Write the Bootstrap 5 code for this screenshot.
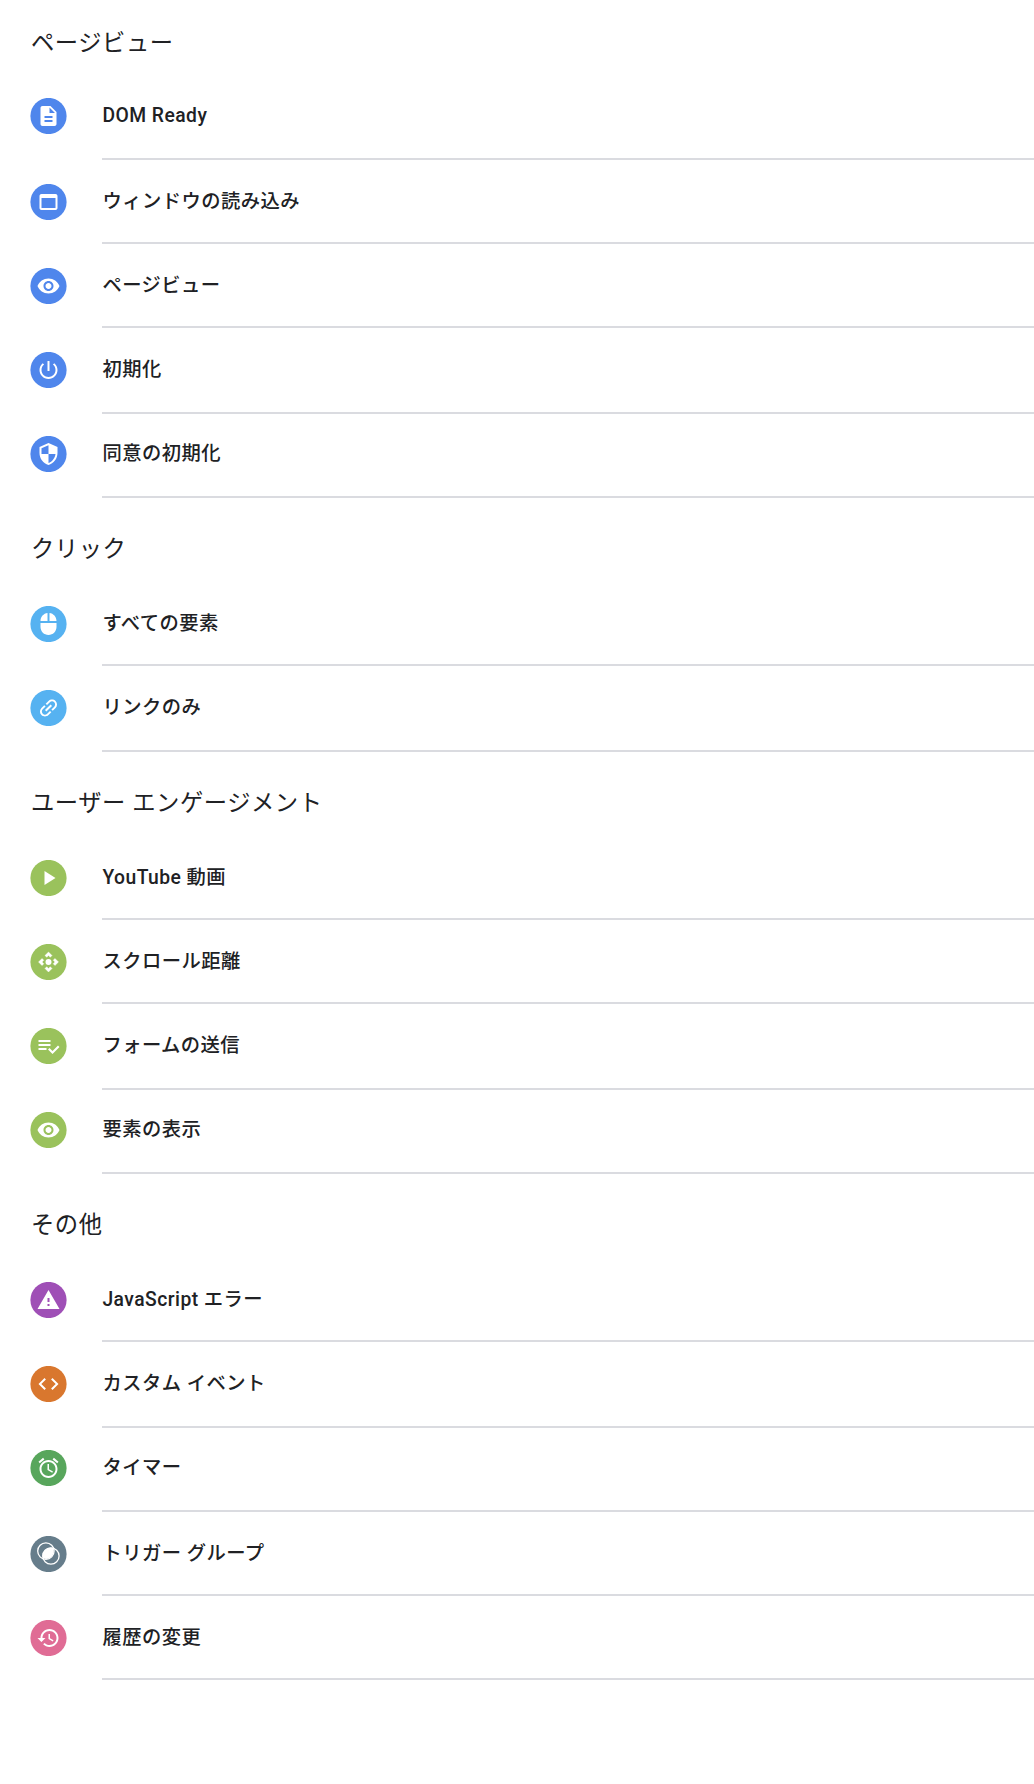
<!DOCTYPE html>
<html lang="ja">
<head>
<meta charset="utf-8">
<meta name="viewport" content="width=device-width, initial-scale=1">
<title>トリガーのタイプ</title>
<link href="https://cdn.jsdelivr.net/npm/bootstrap@5.3.0/dist/css/bootstrap.min.css" rel="stylesheet">
<style>
body{font-family:Roboto,"Noto Sans CJK JP",sans-serif;color:#202124;background:#fff;overflow-x:hidden}
.trig-title{font-size:23.3px;line-height:30px;letter-spacing:.55px;font-weight:400;height:108px;padding:36px 0 0 31px;margin:0}
.trig-first .trig-title{height:98px;padding-top:28px}
.trig-row{padding-left:30px;gap:35.4px;height:84px}
.trig-row.top0{height:60px}
.trig-row.top24{padding-top:24px}
.trig-row.top22{padding-top:22px}
.trig-row.tall{height:86px}
.trig-row.top0.tall{height:62px}
.trig-icon{width:37px;height:36px;flex:none;fill:#fff}
.trig-label{border-bottom:2px solid #dadbe0;font-size:19.3px;line-height:35px;font-weight:500;letter-spacing:.47px;white-space:nowrap}
.tone-blue{fill:#4f86ec}.tone-sky{fill:#56b2f1}.tone-lime{fill:#9ac25c}
.tone-purple{fill:#9f4fb6}.tone-orange{fill:#d9772e}.tone-green{fill:#58a65c}
.tone-slate{fill:#667d8b}.tone-pink{fill:#e06c95}
</style>
</head>
<body>
<main id="app"></main>
<script src="https://cdn.jsdelivr.net/npm/bootstrap@5.3.0/dist/js/bootstrap.bundle.min.js"></script>
<script>
const icons={
doc:'<path d="M14 2H6c-1.1 0-1.99.9-1.99 2L4 20c0 1.1.89 2 1.99 2H18c1.1 0 2-.9 2-2V8l-6-6zm2 16H8v-2h8v2zm0-4H8v-2h8v2zm-3-5V3.5L18.5 9H13z"/>',
win:'<path d="M19 4H5c-1.11 0-2 .9-2 2v12c0 1.1.89 2 2 2h14c1.1 0 2-.9 2-2V6c0-1.1-.89-2-2-2zm0 14H5V8h14v10z"/>',
eye:'<path d="M12 4.5C7 4.5 2.73 7.61 1 12c1.73 4.39 6 7.5 11 7.5s9.27-3.11 11-7.5c-1.73-4.39-6-7.5-11-7.5zM12 17c-2.76 0-5-2.24-5-5s2.24-5 5-5 5 2.24 5 5-2.24 5-5 5zm0-8c-1.66 0-3 1.34-3 3s1.34 3 3 3 3-1.34 3-3-1.34-3-3-3z"/>',
power:'<path d="M13 3h-2v10h2V3zm4.83 2.17l-1.42 1.42C17.99 7.86 19 9.81 19 12c0 3.87-3.13 7-7 7s-7-3.13-7-7c0-2.19 1.01-4.14 2.58-5.42L6.17 5.17C4.23 6.82 3 9.26 3 12c0 4.97 4.03 9 9 9s9-4.03 9-9c0-2.74-1.23-5.18-3.17-6.83z"/>',
shield:'<path d="M12 1L3 5v6c0 5.55 3.84 10.74 9 12 5.16-1.26 9-6.45 9-12V5l-9-4zm0 10.99h7c-.53 4.12-3.28 7.79-7 8.94V12H5V6.3l7-3.11v8.8z"/>',
mouse:'<path d="M13 1.07V9h7c0-4.08-3.05-7.44-7-7.93zM4 15c0 4.42 3.58 8 8 8s8-3.58 8-8v-4H4v4zm7-13.93C7.05 1.56 4 4.92 4 9h7V1.07z"/>',
link:'<path transform="rotate(-45 12 12)" d="M3.9 12c0-1.71 1.39-3.1 3.1-3.1h4V7H7c-2.76 0-5 2.24-5 5s2.24 5 5 5h4v-1.9H7c-1.71 0-3.1-1.39-3.1-3.1zM8 13h8v-2H8v2zm9-6h-4v1.9h4c1.71 0 3.1 1.39 3.1 3.1s-1.39 3.1-3.1 3.1h-4V17h4c2.76 0 5-2.24 5-5s-2.24-5-5-5z"/>',
play:'<path d="M8 5v14l11-7z"/>',
scroll:'<circle cx="12" cy="12" r="3"/><path d="M15.540 5.540L13.770 7.300 12 5.540 10.230 7.300 8.460 5.540 12 2zM18.460 15.540l-1.760-1.770L18.460 12l-1.760-1.770 1.760-1.770L22 12zM8.460 18.460l1.770-1.760L12 18.460l1.770-1.760 1.770 1.760L12 22zM5.540 8.460l1.760 1.770L5.540 12l1.760 1.770-1.760 1.770L2 12z" stroke="#fff" stroke-width=".4"/>',
form:'<path d="M14 10H2v2h12v-2zm0-4H2v2h12V6zM2 16h8v-2H2v2zm19.500-4.500L23 13l-6.990 7-4.510-4.500L13 14l3.010 3 5.490-5.500z"/>',
warn:'<path d="M1 21h22L12 2 1 21zm12-3h-2v-2h2v2zm0-4h-2v-4h2v4z"/>',
code:'<path d="M9.400 16.600L4.800 12l4.600-4.600L8 6l-6 6 6 6 1.400-1.400zm5.200 0l4.600-4.600-4.600-4.600L16 6l6 6-6 6-1.400-1.400z"/>',
alarm:'<path d="M22 5.720l-4.600-3.860-1.290 1.530 4.600 3.860L22 5.720zM7.880 3.390L6.600 1.860 2 5.710l1.290 1.530 4.590-3.850zM12.500 8H11v6l4.750 2.850.75-1.230-4-2.370V8zM12 4c-4.970 0-9 4.030-9 9s4.020 9 9 9c4.970 0 9-4.030 9-9s-4.030-9-9-9zm0 16c-3.870 0-7-3.130-7-7s3.130-7 7-7 7 3.130 7 7-3.130 7-7 7z"/>',
group:'<clipPath id="lens"><circle cx="14.300" cy="13.900" r="8.300"/></clipPath><circle cx="9.500" cy="9.200" r="7.700" clip-path="url(#lens)"/><g fill="none" stroke="#fff" stroke-width="1.300"><circle cx="9.400" cy="9.100" r="8.200"/><circle cx="14.400" cy="14" r="8.200"/></g>',
history:'<path d="M13 3c-4.970 0-9 4.030-9 9H1l3.890 3.890.07.14L9 12H6c0-3.870 3.130-7 7-7s7 3.130 7 7-3.130 7-7 7c-1.930 0-3.680-.79-4.940-2.060l-1.420 1.420C8.270 19.990 10.510 21 13 21c4.970 0 9-4.030 9-9s-4.030-9-9-9zm-1 5v5l4.280 2.540.72-1.210-3.500-2.080V8H12z"/>'};
/* each row: label, icon, tone, top spacing and extra height */
const sections=[
['ページビュー',[['DOM Ready','doc','blue','top0 tall'],['ウィンドウの読み込み','win','blue','top24'],['ページビュー','eye','blue','top24'],['初期化','power','blue','top24 tall'],['同意の初期化','shield','blue','top22']]],
['クリック',[['すべての要素','mouse','sky','top0'],['リンクのみ','link','sky','top24 tall']]],
['ユーザー エンゲージメント',[['YouTube 動画','play','lime','top0'],['スクロール距離','scroll','lime','top24'],['フォームの送信','form','lime','top24 tall'],['要素の表示','eye','lime','top22']]],
['その他',[['JavaScript エラー','warn','purple','top0'],['カスタム イベント','code','orange','top24 tall'],['タイマー','alarm','green','top22'],['トリガー グループ','group','slate','top24'],['履歴の変更','history','pink','top24']]]];
document.getElementById('app').innerHTML=sections.map(([t,rows],i)=>`<section class="${i?'':'trig-first'}"><h2 class="trig-title">${t}</h2>${rows.map(([l,ic,c,k])=>`<div class="trig-row d-flex ${k}"><svg class="trig-icon" viewBox="0 0 37 36" aria-hidden="true"><circle class="tone-${c}" cx="18.500" cy="18" r="18.100"/><g transform="translate(6.500 6)">${icons[ic]}</g></svg><div class="trig-label flex-grow-1"><span>${l}</span></div></div>`).join('')}</section>`).join('');
</script>
</body>
</html>
